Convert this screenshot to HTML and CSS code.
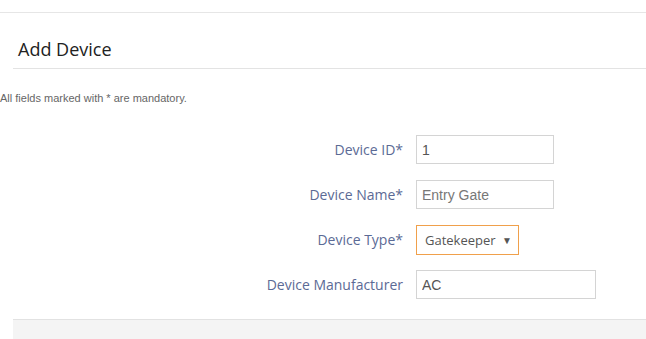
FILE: index.html
```html
<!DOCTYPE html>
<html lang="en">
<head>
    <meta charset="UTF-8">
    <title>Add Device</title>
    <link rel="stylesheet" href="styles.css">
</head>
<body>
    <div class="topbar"></div>
    <div class="page-header">
        <h2>Add Device</h2>
    </div>
    <p class="note">All fields marked with * are mandatory.</p>

    <form class="device-form">
        <div class="form-row">
            <label for="deviceId">Device ID*</label>
            <input type="text" id="deviceId" class="field short" value="1">
        </div>
        <div class="form-row">
            <label for="deviceName">Device Name*</label>
            <input type="text" id="deviceName" class="field short muted" value="Entry Gate">
        </div>
        <div class="form-row">
            <label for="deviceType">Device Type*</label>
            <div class="select-box">
                <span>Gatekeeper</span>
                <span class="caret">&#9660;</span>
            </div>
        </div>
        <div class="form-row">
            <label for="deviceMaker">Device Manufacturer</label>
            <input type="text" id="deviceMaker" class="field long" value="AC">
        </div>
    </form>

    <div class="footer-bar"></div>
</body>
</html>
```

FILE: styles.css
```css
body {
    margin: 0;
    background: #fff;
    font-family: "Open Sans", Arial, sans-serif;
    overflow: hidden;
}

.topbar {
    height: 12px;
    border-bottom: 1px solid #e6e6e6;
}

.page-header {
    margin-left: 13px;
    padding: 24px 0 0 5px;
    height: 31px;
    border-bottom: 1px solid #e3e3e3;
}

.page-header h2 {
    margin: 0;
    font-size: 18px;
    font-weight: 400;
    color: #222;
    line-height: 24px;
}

.note {
    margin: 23px 0 0 0;
    font-family: "Liberation Sans", Arial, sans-serif;
    font-size: 11px;
    color: #666;
    line-height: 12px;
}

.device-form {
    margin-top: 31px;
}

.form-row {
    display: flex;
    align-items: center;
    height: 29px;
    margin-bottom: 16px;
}

.form-row label {
    text-align: right;
    padding-right: 13px;
    box-sizing: border-box;
    width: 416px;
    font-size: 14px;
    color: #5b6a95;
}

.field {
    box-sizing: border-box;
    height: 29px;
    border: 1px solid #d4d4d4;
    padding: 0 5px;
    font-family: "Liberation Sans", Arial, sans-serif;
    font-size: 14px;
    color: #555;
    outline: none;
}

.field.short {
    width: 138px;
}

.field.long {
    width: 180px;
}

.field.muted {
    color: #777;
}

.select-box {
    box-sizing: border-box;
    width: 103px;
    height: 30px;
    border: 1px solid #f0a04b;
    display: flex;
    align-items: center;
    justify-content: space-between;
    padding: 0 6px 0 8px;
    font-size: 13px;
    color: #555;
}

.select-box .caret {
    font-size: 10px;
    color: #555;
}

.footer-bar {
    margin: 20px 0 0 13px;
    height: 20px;
    background: #f4f4f4;
    border-top: 1px solid #e2e2e2;
}
```
